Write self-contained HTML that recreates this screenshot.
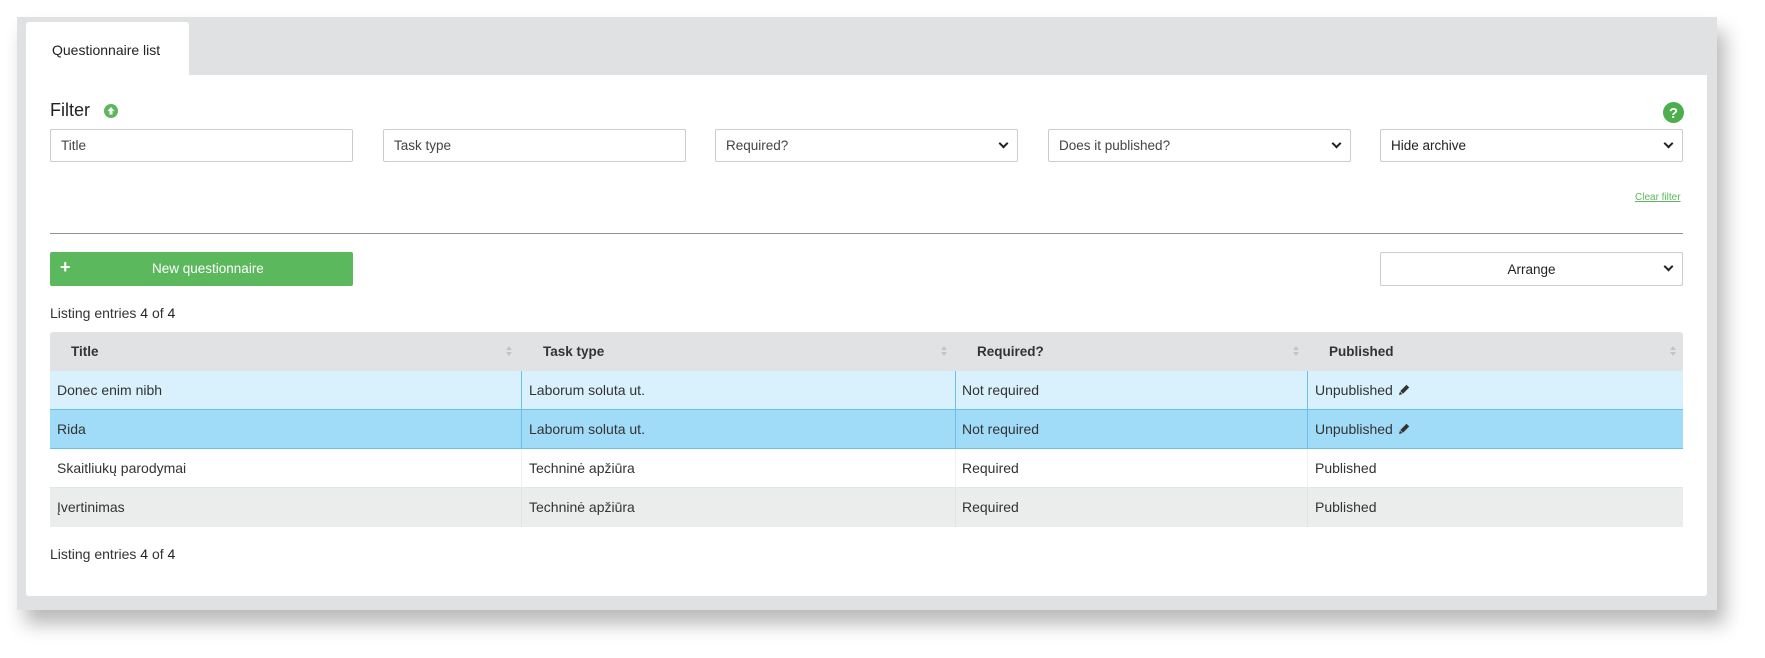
<!DOCTYPE html>
<html><head><meta charset="utf-8"><style>
*{box-sizing:border-box;margin:0;padding:0}
body{width:1765px;height:658px;background:#fff;font-family:"Liberation Sans",sans-serif;color:#333;position:relative;overflow:hidden}
.abs{position:absolute}
.frame{left:17px;top:17px;width:1700px;height:593px;background:#e0e1e3;box-shadow:8px 14px 18px rgba(0,0,0,.28)}
.panel{left:26px;top:75px;width:1681px;height:521px;background:#fff;border-radius:0 0 3px 3px}
.tab{left:26px;top:22px;width:163px;height:54px;background:#fff;border-radius:3px 3px 0 0;font-size:14px;color:#222;padding:20px 0 0 26px}
.inp{top:129px;height:33px;width:303px;border:1px solid #ccc;border-radius:2px;font-size:13.5px;color:#444;padding:8px 0 0 10px;background:#fff}
.chev{position:absolute;right:10px;top:10px;width:7px;height:7px;border-right:2px solid #222;border-bottom:2px solid #222;transform:rotate(45deg)}
.txt{font-size:14px;color:#333}
.th{top:332px;height:39px;background:#e0e2e4;left:50px;width:1633px;border-radius:3px 3px 0 0}
.row{left:50px;width:1633px;height:39px}
.c{position:absolute;font-size:14px;top:11px}
.h{position:absolute;font-size:13.5px;font-weight:bold;top:12px;color:#333}
.sort{position:absolute;top:14px;width:6px;height:11px}
.sort:before{content:"";position:absolute;left:0;top:0;border:3px solid transparent;border-bottom:4px solid #c2c4c6;border-top:0}
.sort:after{content:"";position:absolute;left:0;top:6px;border:3px solid transparent;border-top:4px solid #c2c4c6;border-bottom:0}
.vl{position:absolute;top:0;width:1px;height:39px}
.pen{position:absolute;top:13px}
</style></head><body>
<div class="abs frame"></div>
<div class="abs panel"></div>
<div class="abs tab">Questionnaire list</div>

<div class="abs" style="left:50px;top:100px;font-size:18px;color:#222">Filter</div>
<svg class="abs" style="left:104px;top:104px" width="14" height="14" viewBox="0 0 14 14"><circle cx="7" cy="7" r="7" fill="#5cb85c"/><path d="M7 3 L3.5 7 H5.5 V10.5 H8.5 V7 H10.5 Z" fill="#fff"/></svg>
<svg class="abs" style="left:1663px;top:102px" width="21" height="21" viewBox="0 0 21 21"><circle cx="10.5" cy="10.5" r="10.5" fill="#4cae4c"/><text x="10.5" y="16" font-family="Liberation Sans" font-weight="bold" font-size="15" fill="#fff" text-anchor="middle">?</text></svg>

<div class="abs inp" style="left:50px">Title</div>
<div class="abs inp" style="left:383px">Task type</div>
<div class="abs inp" style="left:715px">Required?<span class="chev"></span></div>
<div class="abs inp" style="left:1048px">Does it published?<span class="chev"></span></div>
<div class="abs inp" style="left:1380px;color:#222">Hide archive<span class="chev"></span></div>

<div class="abs" style="left:1635px;top:192px;font-size:10px;color:#5cb85c;text-decoration:underline">Clear filter</div>
<div class="abs" style="left:50px;top:233px;width:1633px;height:1px;background:#8a9499"></div>

<div class="abs" style="left:50px;top:252px;width:303px;height:34px;background:#5cb85c;border-radius:2px;color:#fff;font-size:13.5px">
<span style="position:absolute;left:10px;top:5px;font-size:18px;font-weight:bold">+</span>
<span style="position:absolute;left:102px;top:9px">New questionnaire</span></div>
<div class="abs inp" style="left:1380px;top:252px;height:34px;text-align:center;padding:9px 0 0 0;color:#222">Arrange<span class="chev"></span></div>

<div class="abs txt" style="left:50px;top:305px">Listing entries <span style="color:#222">4</span> of <span style="color:#222">4</span></div>

<div class="abs th">
<span class="h" style="left:21px">Title</span><span class="sort" style="left:456px"></span>
<span class="h" style="left:493px">Task type</span><span class="sort" style="left:891px"></span>
<span class="h" style="left:927px">Required?</span><span class="sort" style="left:1243px"></span>
<span class="h" style="left:1279px">Published</span><span class="sort" style="left:1620px"></span>
</div>
<div class="abs row" style="top:371px;background:#d9f1fc;border-bottom:1px solid #6cc0e6">
<span class="c" style="left:7px">Donec enim nibh</span><span class="vl" style="left:471px;background:#6cc0e6"></span>
<span class="c" style="left:479px">Laborum soluta ut.</span><span class="vl" style="left:905px;background:#6cc0e6"></span>
<span class="c" style="left:912px">Not required</span><span class="vl" style="left:1257px;background:#6cc0e6"></span>
<span class="c" style="left:1265px">Unpublished</span>
<svg class="pen" style="left:1349px" width="11" height="11" viewBox="0 0 11 11"><path d="M7.5 0.8 L10.2 3.5 L4 9.7 L1.3 7 Z M0.9 7.6 L3.4 10.1 L0 11 Z" fill="#333"/></svg></div>
<div class="abs row" style="top:410px;background:#a0dcf8;border-bottom:1px solid #6cc0e6">
<span class="c" style="left:7px">Rida</span><span class="vl" style="left:471px;background:#6cc0e6"></span>
<span class="c" style="left:479px">Laborum soluta ut.</span><span class="vl" style="left:905px;background:#6cc0e6"></span>
<span class="c" style="left:912px">Not required</span><span class="vl" style="left:1257px;background:#6cc0e6"></span>
<span class="c" style="left:1265px">Unpublished</span>
<svg class="pen" style="left:1349px" width="11" height="11" viewBox="0 0 11 11"><path d="M7.5 0.8 L10.2 3.5 L4 9.7 L1.3 7 Z M0.9 7.6 L3.4 10.1 L0 11 Z" fill="#333"/></svg></div>
<div class="abs row" style="top:449px;background:#fff;border-bottom:1px solid #e2e4e5">
<span class="c" style="left:7px">Skaitliukų parodymai</span><span class="vl" style="left:471px;background:#eee"></span>
<span class="c" style="left:479px">Techninė apžiūra</span><span class="vl" style="left:905px;background:#eee"></span>
<span class="c" style="left:912px">Required</span><span class="vl" style="left:1257px;background:#eee"></span>
<span class="c" style="left:1265px">Published</span></div>
<div class="abs row" style="top:488px;background:#ebeded">
<span class="c" style="left:7px">Įvertinimas</span><span class="vl" style="left:471px;background:#e2e4e4"></span>
<span class="c" style="left:479px">Techninė apžiūra</span><span class="vl" style="left:905px;background:#e2e4e4"></span>
<span class="c" style="left:912px">Required</span><span class="vl" style="left:1257px;background:#e2e4e4"></span>
<span class="c" style="left:1265px">Published</span></div>

<div class="abs txt" style="left:50px;top:546px">Listing entries <span style="color:#222">4</span> of <span style="color:#222">4</span></div>
</body></html>
